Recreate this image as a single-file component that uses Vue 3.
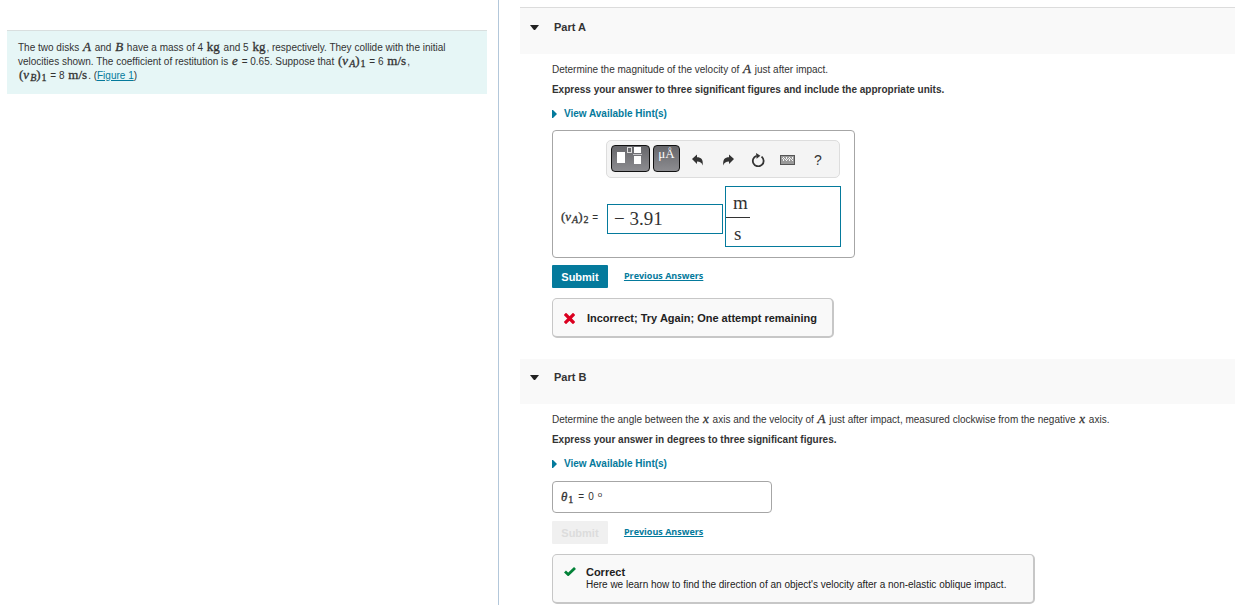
<script setup>
import {reactive} from 'vue';

// Local reactive state
const local = reactive({
  openA: true,
  openB: true,
  value: '− 3.91',
  unitTop: 'm',
  unitBottom: 's',
});
</script>

<template>
  <div class="page">
    <aside class="problem">
      <div class="intro">
        The two disks <i class="m">A</i> and <i class="m">B</i> have a mass of 4 <span class="m">kg</span>
        and 5 <span class="m">kg</span>, respectively. They collide with the initial velocities shown.
        The coefficient of restitution is <i class="m">e</i> = 0.65. Suppose that
        <span class="nowrap"><span class="m">(<i>v</i><sub><i>A</i></sub>)<sub>1</sub></span> = 6 <span class="m">m/s</span>,</span>
        {{ ' ' }}
        <span class="nowrap"><span class="m">(<i>v</i><sub><i>B</i></sub>)<sub>1</sub></span> = 8 <span class="m">m/s</span>.</span>
        (<a href="#figure1">Figure 1</a>)
      </div>
    </aside>

    <main class="parts">
      <section class="part">
        <header class="part-head first">
          <button class="toggle" type="button" @click="local.openA = !local.openA">
            <svg width="9" height="5" viewBox="0 0 9 5"><path d="M0 0h9L5.5 4.4Q4.5 5.4 3.5 4.4z" fill="#222" /></svg>
            Part A
          </button>
        </header>
        <div v-if="local.openA" class="part-body">
          <p>Determine the magnitude of the velocity of <i class="m">A</i> just after impact.</p>
          <p class="strong">Express your answer to three significant figures and include the appropriate units.</p>
          <button class="hints" type="button">
            <svg width="5" height="8" viewBox="0 0 5 8"><path d="M0 0h1l4 4-4 4H0z" fill="#047a9c" /></svg>
            View Available Hint(s)
          </button>

          <div class="answer">
            <div class="toolbar">
              <button class="dark templates" type="button" aria-label="Templates">
                <svg width="37" height="25" viewBox="0 0 37 25">
                  <rect x="5" y="6" width="8" height="11" fill="#fff" />
                  <rect x="15.5" y="1.5" width="4" height="5" fill="none" stroke="#ddd" />
                  <rect x="22" y="1" width="7" height="6" fill="#fff" />
                  <path d="M21 8.5h9" stroke="#c4c4c8" />
                  <rect x="22" y="10" width="7" height="8" fill="#fff" />
                </svg>
              </button>
              <button class="dark units" type="button">μÅ</button>
              <button class="tool" type="button" aria-label="Undo">
                <svg width="12" height="12" viewBox="0 0 12 12"><path d="M0 5l5-4.500v2.700c4 0 6.600 2.200 5.600 8.300-.8-3-2.600-4-5.600-4v2.500z" fill="#333" /></svg>
              </button>
              <button class="tool" type="button" aria-label="Redo">
                <svg width="12" height="12" viewBox="0 0 12 12"><path d="M12 5L7 .5v2.700c-4 0-6.600 2.200-5.600 8.300.8-3 2.600-4 5.600-4v2.500z" fill="#333" /></svg>
              </button>
              <button class="tool" type="button" aria-label="Reset">
                <svg width="14" height="14" viewBox="0 0 14 14">
                  <path d="M10.500 3.600A5.400 5.400 0 1 1 5.500 2.800" fill="none" stroke="#333" stroke-width="1.800" />
                  <path d="M5 0l4.400 2.700L5.600 5.800z" fill="#333" />
                </svg>
              </button>
              <button class="tool" type="button" aria-label="Keyboard shortcuts">
                <svg class="keyboard" width="15" height="10" viewBox="0 0 15 10">
                  <rect x=".5" y=".5" width="14" height="9" fill="#999" stroke="#555" />
                  <path d="M3 2.500h10M3 5.500h10" stroke="#f4f4f4" stroke-dasharray="1 2" />
                  <path d="M2 3.500h11M3 4.500h10" stroke="#eee" stroke-dasharray="1 1" />
                </svg>
              </button>
              <button class="tool help" type="button" aria-label="Help">?</button>
            </div>
            <div class="entry">
              <label class="lhs" for="value"><span class="m">(<i>v</i><sub><i>A</i></sub>)<sub>2</sub></span> =</label>
              <input id="value" v-model="local.value" class="value" type="text" />
              <div class="fraction">
                <input v-model="local.unitTop" type="text" aria-label="Unit numerator" />
                <span class="bar"></span>
                <input v-model="local.unitBottom" type="text" aria-label="Unit denominator" />
              </div>
            </div>
          </div>

          <div class="actions">
            <button class="submit" type="button">Submit</button>
            <a href="#previous-a">Previous Answers</a>
          </div>

          <div class="feedback">
            <svg width="11" height="11" viewBox="0 0 11 11"><path d="M2 2l7 7M9 2L2 9" stroke="#db0020" stroke-width="3.200" stroke-linecap="square" /></svg>
            <strong>Incorrect; Try Again; One attempt remaining</strong>
          </div>
        </div>
      </section>

      <section class="part">
        <header class="part-head">
          <button class="toggle" type="button" @click="local.openB = !local.openB">
            <svg width="9" height="5" viewBox="0 0 9 5"><path d="M0 0h9L5.5 4.4Q4.5 5.4 3.5 4.4z" fill="#222" /></svg>
            Part B
          </button>
        </header>
        <div v-if="local.openB" class="part-body">
          <p>
            Determine the angle between the <i class="m">x</i> axis and the velocity of <i class="m">A</i>
            just after impact, measured clockwise from the negative <i class="m">x</i> axis.
          </p>
          <p class="strong">Express your answer in degrees to three significant figures.</p>
          <button class="hints" type="button">
            <svg width="5" height="8" viewBox="0 0 5 8"><path d="M0 0h1l4 4-4 4H0z" fill="#047a9c" /></svg>
            View Available Hint(s)
          </button>

          <div class="answer result">
            <span class="m"><i>θ</i><sub>1</sub></span><span>=</span><span>0</span><span class="degree">o</span>
          </div>

          <div class="actions">
            <button class="submit" type="button" disabled>Submit</button>
            <a href="#previous-b">Previous Answers</a>
          </div>

          <div class="feedback correct">
            <svg width="12" height="9" viewBox="0 0 12 9"><path d="M1 4.500l3.200 3L11 1" fill="none" stroke="#038238" stroke-width="2.800" /></svg>
            <div>
              <strong>Correct</strong>
              <div>Here we learn how to find the direction of an object's velocity after a non-elastic oblique impact.</div>
            </div>
          </div>
        </div>
      </section>
    </main>
  </div>
</template>

<style>
body {
  background: #fff;
}
</style>

<style scoped>
.page {
  display: flex;
  min-height: 100vh;
  font-family: 'Liberation Sans', Arial, sans-serif;
  font-size: 10px;
  line-height: 14px;
  color: #333;
}

.page * {
  box-sizing: border-box;
}

button,
input {
  font-family: inherit;
  color: inherit;
  padding: 0;
  border: 0;
  background: none;
}

button {
  cursor: pointer;
}

a {
  color: #047a9c;
}

p {
  margin: 0 0 6px;
}

svg {
  display: block;
  flex: none;
}

/* inline math */
.m {
  margin: 0 1px;
  font-family: 'Liberation Serif', 'Times New Roman', serif;
  font-size: 13px;
  line-height: 10px;
  -webkit-text-stroke: 0.3px #333;
}

.m sub {
  margin-left: 1px;
  font-size: 10px;
  line-height: 0;
  vertical-align: -2px;
}

.nowrap {
  white-space: nowrap;
}

.problem {
  width: 40.4%;
  flex: none;
  border-right: 1px solid #b3c7da;
  padding: 30px 11px 0 7px;
}

.intro {
  padding: 10px 20px 11px 11px;
  border-top: 1px solid #d9dfdf;
  background: #e6f6f6;
}

.parts {
  flex: 1;
  min-width: 0;
  padding: 7px 0 0 21px;
}

.part + .part {
  margin-top: 21px;
}

.part-head {
  padding: 11px 10px 20px;
  background: #f9f9f9;
}

.part-head.first {
  padding: 12px 10px 20px;
  border-top: 1px solid #dcdcdc;
}

.toggle {
  display: flex;
  align-items: center;
  gap: 15px;
  font-size: 11px;
  font-weight: bold;
  line-height: 14px;
}

.part-body {
  padding: 9px 32px 0;
}

.strong {
  font-weight: bold;
}

.hints {
  display: flex;
  align-items: center;
  gap: 7px;
  margin-top: 10px;
  font-size: 10px;
  font-weight: bold;
  line-height: 14px;
  color: #047a9c;
}

.answer {
  width: 303px;
  max-width: 100%;
  margin-top: 9px;
  padding: 9px 8px 10px;
  border: 1px solid #a6a6a6;
  border-radius: 4px;
}

.toolbar {
  display: flex;
  align-items: center;
  width: 234px;
  height: 38px;
  margin-left: 45px;
  padding: 0 4px 2px;
  border: 1px solid #ddd;
  border-radius: 5px;
  background: #f4f4f4;
}

.dark {
  width: 39px;
  height: 27px;
  border: 1px solid #111;
  border-radius: 4px;
  background: linear-gradient(#66666a, #8c8c90);
  color: #fff;
}

.units {
  width: 27px;
  margin: 0 3px;
  padding-bottom: 8px;
  font-family: 'Liberation Serif', 'Times New Roman', serif;
  font-size: 13px;
  line-height: 16px;
}

.tool {
  display: flex;
  align-items: center;
  justify-content: center;
  width: 30px;
  height: 28px;
  padding-top: 4px;
  font-size: 14px;
}

.entry {
  display: flex;
  align-items: center;
  margin-top: 8px;
}

.lhs {
  width: 46px;
  margin-top: 2px;
}

.lhs .m {
  margin-left: 0;
}

.value {
  width: 116px;
  height: 30px;
  margin-top: 4px;
  padding: 1px 6px 0;
  border: 1px solid #047a9c;
  font-family: 'Liberation Serif', 'Times New Roman', serif;
  font-size: 19px;
}

.fraction {
  width: 116px;
  height: 61px;
  margin-left: 2px;
  border: 1px solid #047a9c;
}

.fraction input {
  display: block;
  width: 100%;
  height: 30px;
  padding: 2px 7px 0;
  font-family: 'Liberation Serif', 'Times New Roman', serif;
  font-size: 19px;
}

.fraction .bar + input {
  height: 28px;
  padding: 4px 8px 0;
}

.bar {
  display: block;
  width: 24px;
  height: 1px;
  background: #333;
}

.actions {
  display: flex;
  align-items: center;
  gap: 16px;
  margin: 7px 0 10px;
}

.actions a {
  padding-bottom: 2px;
  font-family: 'Open Sans', sans-serif;
  font-size: 9px;
  font-weight: bold;
}

.submit {
  width: 56px;
  height: 23px;
  border-radius: 1px;
  background: #047a9c;
  color: #fff;
  font-size: 11px;
  font-weight: bold;
}

.submit:disabled {
  background: #f0f0f0;
  color: #dcdcdc;
  cursor: default;
}

.feedback {
  display: flex;
  align-items: center;
  gap: 12px;
  width: fit-content;
  padding: 13px 15px 11px 11px;
  border: 1px solid #c7c7c7;
  border-width: 1px 2px 2px 1px;
  border-radius: 5px;
  background: #f9f9f9;
  color: #222;
}

.feedback strong {
  display: block;
  font-size: 11px;
  line-height: 13px;
}

.feedback.correct {
  align-items: flex-start;
  gap: 10px;
  padding: 11px 27px 11px 11px;
  line-height: 12px;
}

.feedback.correct svg {
  margin-top: 1px;
}

.result {
  display: flex;
  align-items: center;
  gap: 4px;
  width: 220px;
  height: 32px;
  margin: 10px 0 8px;
  padding: 0 7px;
}

.degree {
  font-size: 8px;
  line-height: 8px;
  padding-bottom: 5px;
}
</style>
